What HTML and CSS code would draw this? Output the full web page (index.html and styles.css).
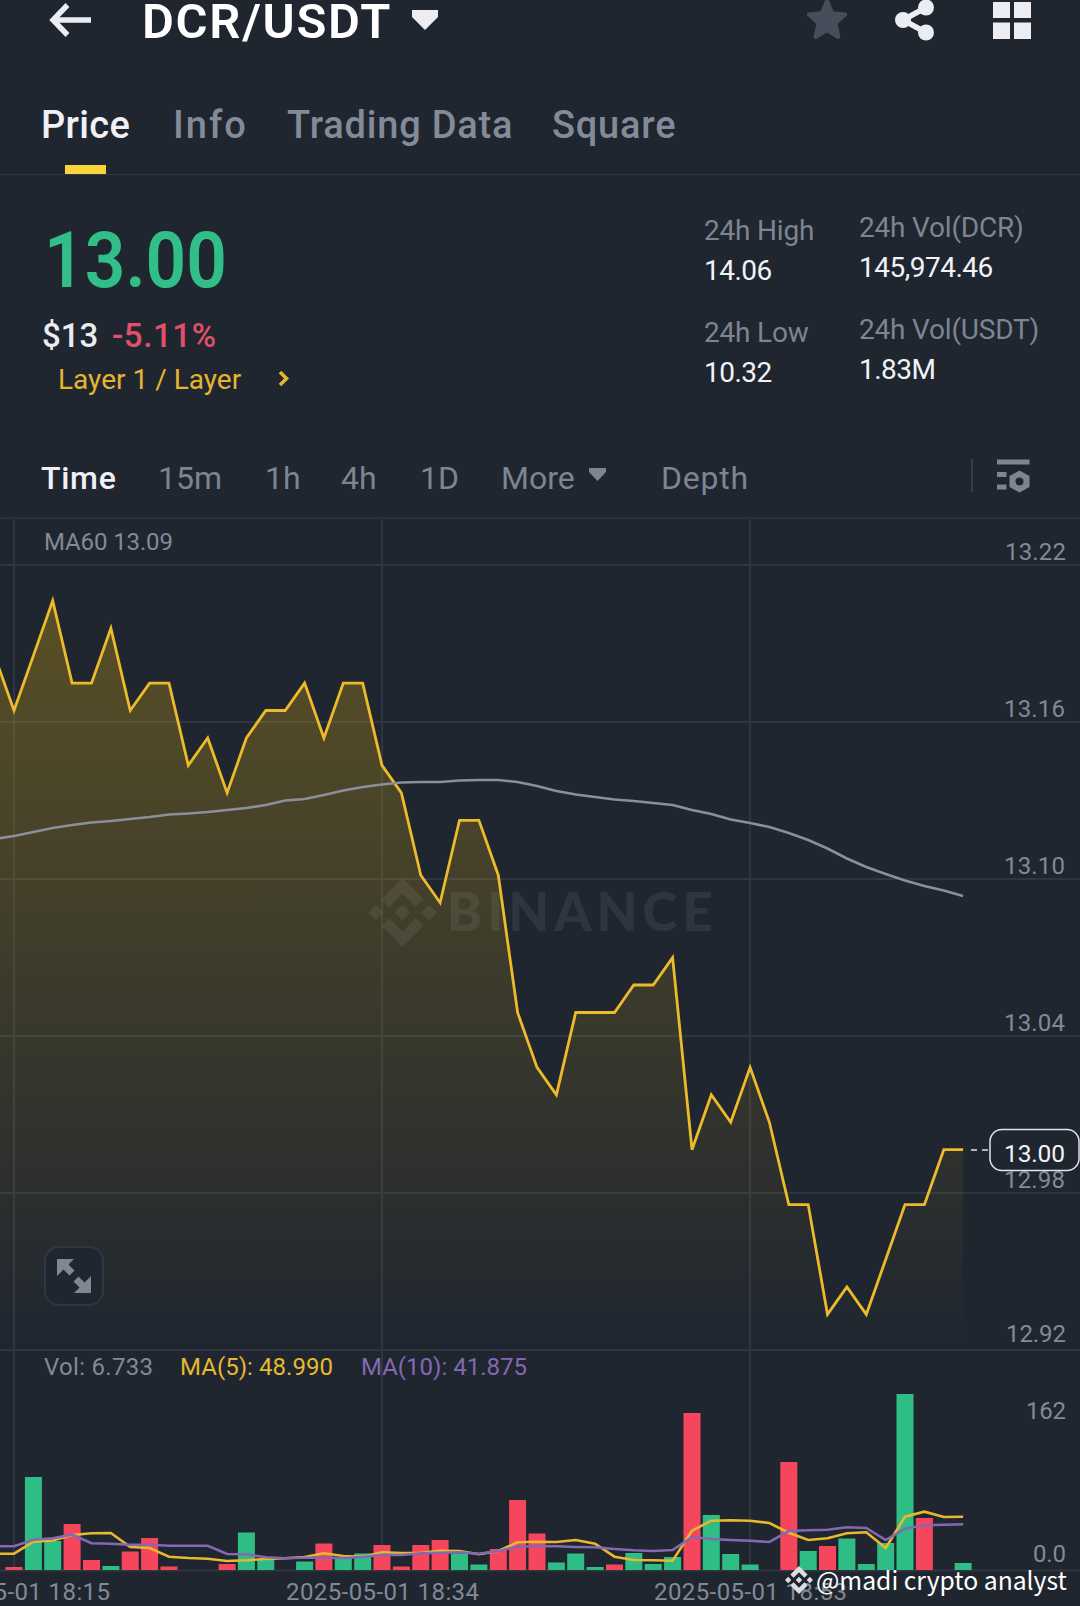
FILE: index.html
```html
<!DOCTYPE html>
<html lang="en">
<head>
    <meta charset="UTF-8">
    <meta name="viewport" content="width=device-width, initial-scale=1.0">
    <title>DCR/USDT</title>
    <link rel="stylesheet" href="styles.css">
</head>
<body>

    <!-- Shared logo shape -->
    <svg class="symbols" width="0" height="0">
        <symbol id="logo" viewBox="0 0 24 24">
            <path d="M16.624 13.92l2.7175 2.7154-7.353 7.353-7.353-7.352 2.7175-2.7164 4.6355 4.6595 4.6356-4.6595zm4.6366-4.6366L24 12l-2.7154 2.7164L18.5682 12l2.6924-2.7164zm-9.272.001l2.7163 2.6914-2.7164 2.7174v-.001L9.2721 12l2.7164-2.7154zm-9.2722-.001L5.4088 12l-2.6914 2.6924L0 12l2.7164-2.7164zM11.9885.0115l7.353 7.329-2.7174 2.7154-4.6356-4.6356-4.6355 4.6595-2.7174-2.7154 7.353-7.353z"/>
        </symbol>
    </svg>

    <header class="header">
        <svg class="back" width="42" height="36" viewBox="0 0 42 36">
            <path d="M18.5 3L4 18l14.5 15M4 18h38" fill="none" stroke="currentColor" stroke-width="5.4"/>
        </svg>
        <h1 class="pair">DCR/USDT</h1>
        <svg class="pair-caret" width="26" height="20" viewBox="0 0 26 20">
            <path d="M0 0h26v7L13 20 0 7z" fill="currentColor"/>
        </svg>
        <div class="header-actions">
            <svg class="star" width="42" height="43" viewBox="0 0 42 43">
                <path d="M21 3l5.2 12.2 13 1.2-9.8 9 3 13.6L21 32.2 9.6 39l3-13.6-9.8-9 13-1.2z" fill="currentColor" stroke="currentColor" stroke-width="4" stroke-linejoin="round"/>
            </svg>
            <svg class="share" width="40" height="42" viewBox="0 0 40 42">
                <path d="M31 8.5L8 21l23 12.5" fill="none" stroke="currentColor" stroke-width="5.5"/>
                <circle cx="8" cy="21" r="8" fill="currentColor"/>
                <circle cx="31" cy="8.5" r="8" fill="currentColor"/>
                <circle cx="31" cy="33.5" r="8" fill="currentColor"/>
            </svg>
            <svg class="apps" width="38" height="38" viewBox="0 0 38 38">
                <path d="M0 1h17v16H0zM21 1h17v16H21zM0 21.5h17V38H0zM21 21.5h17V38H21z" fill="currentColor"/>
            </svg>
        </div>
    </header>

    <nav class="tabs">
        <div class="tab active">Price</div>
        <div class="tab info">Info</div>
        <div class="tab">Trading Data</div>
        <div class="tab">Square</div>
    </nav>

    <section class="summary">
        <div class="quote">
            <div class="last-price">13.00</div>
            <div class="change"><span class="fiat">$13</span><span class="percent">-5.11%</span></div>
            <div class="category">
                <span>Layer 1 / Layer</span>
                <svg width="12" height="17" viewBox="0 0 12 17">
                    <path d="M2 2l6.5 6.5L2 15" fill="none" stroke="currentColor" stroke-width="3.6"/>
                </svg>
            </div>
        </div>
        <div class="stats">
            <div class="stat">
                <div class="stat-label">24h High</div>
                <div class="stat-value">14.06</div>
            </div>
            <div class="stat">
                <div class="stat-label">24h Low</div>
                <div class="stat-value">10.32</div>
            </div>
        </div>
        <div class="stats volume">
            <div class="stat">
                <div class="stat-label">24h Vol(DCR)</div>
                <div class="stat-value">145,974.46</div>
            </div>
            <div class="stat">
                <div class="stat-label">24h Vol(USDT)</div>
                <div class="stat-value">1.83M</div>
            </div>
        </div>
    </section>

    <div class="intervals">
        <span class="interval active">Time</span>
        <span class="interval">15m</span>
        <span class="interval">1h</span>
        <span class="interval">4h</span>
        <span class="interval">1D</span>
        <span class="interval more">More
            <svg width="17" height="13" viewBox="0 0 17 13"><path d="M0 0h17v4L8.5 13 0 4z" fill="currentColor"/></svg>
        </span>
        <span class="interval depth">Depth</span>
        <span class="divider"></span>
        <svg class="settings" width="33" height="34" viewBox="0 0 33 34">
            <path d="M0 .5h32.5v5H0zM0 13h9.5v5H0zM0 25.500h9.5v5H0z" fill="currentColor"/>
            <path fill-rule="evenodd" d="M22.5 11.5l10 5.5v11l-10 5.5-10-5.5V17zM22.5 18.5a4 4 0 1 0 0 8 4 4 0 0 0 0-8z" fill="currentColor"/>
        </svg>
    </div>

    <main class="chart">
        <svg class="plot" width="1080" height="1087" viewBox="0 519 1080 1087">
            <defs>
                <linearGradient id="areaFill" gradientUnits="userSpaceOnUse" x1="0" y1="600" x2="0" y2="1350">
                    <stop offset="0" stop-color="#f0b90b" stop-opacity="0.28"/>
                    <stop offset="1" stop-color="#f0b90b" stop-opacity="0"/>
                </linearGradient>
            </defs>

            <g class="grid">
                <path d="M0 565H1080M0 722H1080M0 879H1080M0 1036H1080M0 1193H1080M0 1350H1080M0 1570.5H1080"/>
                <path d="M14 519V1570M382 519V1570M750 519V1570"/>
            </g>

            <path id="area" fill="url(#areaFill)"/>

            <g class="brand">
                <use href="#logo" x="368" y="878" width="69" height="69"/>
                <text x="447" y="931" textLength="266">BINANCE</text>
            </g>

            <path id="priceLine" class="line price-line"/>
            <path id="ma60" class="line ma60-line"/>
            <path class="last-dash" d="M971 1150H990"/>

            <g id="bars"></g>
            <path id="ma5" class="line ma5-line"/>
            <path id="ma10" class="line ma10-line"/>

            <g class="label">
                <text x="44" y="550" textLength="129">MA60 13.09</text>
                <text x="1005" y="559.5" textLength="61">13.22</text>
                <text x="1004" y="717" textLength="61">13.16</text>
                <text x="1004" y="874" textLength="61">13.10</text>
                <text x="1004" y="1031" textLength="61">13.04</text>
                <text x="1004" y="1188" textLength="61">12.98</text>
                <text x="1006" y="1342" textLength="60">12.92</text>
                <text x="1026" y="1419" textLength="40">162</text>
                <text x="1033" y="1562" textLength="33">0.0</text>
                <text x="44" y="1375" textLength="109">Vol: 6.733</text>
                <text class="ma5-text" x="180" y="1375" textLength="153">MA(5): 48.990</text>
                <text class="ma10-text" x="361" y="1375" textLength="166">MA(10): 41.875</text>
                <text x="-83" y="1600" textLength="193">2025-05-01 18:15</text>
                <text x="286" y="1600" textLength="193">2025-05-01 18:34</text>
                <text x="654" y="1600" textLength="193">2025-05-01 18:53</text>
            </g>

            <rect class="last-box" x="990" y="1129.5" width="89" height="41" rx="12"/>
            <text class="last-text" x="1004" y="1162" textLength="61">13.00</text>
        </svg>

        <div class="expand">
            <svg width="34" height="34" viewBox="0 0 34 34">
                <path d="M0 0h17l-5.5 5.5 6 6-5 5-6-6L0 17zM34 34H17l5.5-5.5-6-6 5-5 6 6L34 17z" fill="currentColor"/>
            </svg>
        </div>

        <div class="watermark">
            <svg width="28" height="28"><use href="#logo" width="28" height="28"/></svg>
            <span>@madi crypto analyst</span>
        </div>
    </main>

    <script src="chart.js"></script>
</body>
</html>
```

FILE: styles.css
```css
/* Base Styles */

* {
    box-sizing: border-box;
}

body {
    margin: 0;
    width: 1080px;
    height: 1606px;
    overflow: hidden;
    background-color: #1f2630;
    color: #eaecef;
    font-family: Roboto, "Liberation Sans", sans-serif;
}

svg {
    display: block;
    flex-shrink: 0;
}

.symbols {
    position: absolute;
}

/* Header */

.header {
    display: flex;
    align-items: center;
    height: 39px;
    margin-bottom: 61px;
    padding: 0 49px 0 49px;
    color: #ebedf3;
}

.pair {
    margin: 5px 0 0 51px;
    width: 270px;
    font-size: 49px;
    line-height: 44px;
    font-weight: 600;
    letter-spacing: 1.7px;
    color: #fff;
}

.header-actions {
    display: flex;
    align-items: center;
    margin-left: auto;
}

.star {
    color: #474d5b;
}

.share {
    margin-left: 47px;
}

.apps {
    margin-left: 58px;
}

/* Tabs */

.tabs {
    display: grid;
    grid-template-columns: 132px 114px 265px auto;
    height: 75px;
    padding-left: 41px;
    border-bottom: 1px solid #2f3642;
}

.tab {
    justify-self: start;
    font-size: 38px;
    line-height: 50px;
    font-weight: 500;
    letter-spacing: 0.8px;
    color: #848b98;
}

.tab.active {
    letter-spacing: 0.3px;
    color: #f0f1f6;
}

.tab.info {
    letter-spacing: 2px;
}

.tab.active::after {
    content: "";
    display: block;
    width: 41px;
    height: 9px;
    margin: 15px auto 0;
    background-color: #f8d33a;
}

/* Price summary */

.summary {
    display: flex;
    height: 283px;
    padding-left: 42px;
}

.quote {
    width: 662px;
    padding-top: 46px;
}

.last-price {
    font-size: 77px;
    line-height: 80px;
    font-weight: 600;
    color: #32be88;
    transform: translateX(2px) scaleX(0.925);
    transform-origin: left;
}

.change {
    display: flex;
    margin-top: 15px;
    font-size: 33px;
    line-height: 40px;
    font-weight: 500;
}

.fiat {
    width: 70px;
}

.percent {
    letter-spacing: 0.6px;
    color: #e0506a;
}

.category {
    display: flex;
    align-items: center;
    margin: 4px 0 0 16px;
    font-size: 28px;
    line-height: 40px;
    color: #e6b42e;
}

.category span {
    width: 220px;
}

.category svg {
    margin-top: -3px;
}

.stats {
    display: flex;
    flex-direction: column;
    gap: 22px;
    width: 155px;
    padding-top: 35.5px;
    font-size: 28px;
    line-height: 40px;
    letter-spacing: -0.2px;
    white-space: nowrap;
}

.stats.volume {
    padding-top: 32.5px;
}

.stat-label {
    color: #7d8492;
}

.stat-value {
    letter-spacing: -0.5px;
    color: #f2f3f7;
}

/* Intervals */

.intervals {
    display: grid;
    grid-template-columns: 117px 107px 76px 79px 81px 160px 310px 25px auto;
    height: 61px;
    padding-left: 41px;
    border-bottom: 2px solid #2b303c;
    font-size: 32px;
    line-height: 40px;
    color: #7d8492;
}

.interval.active {
    font-weight: 500;
    letter-spacing: 0.7px;
    color: #eff0f5;
}

.interval.more {
    display: flex;
    gap: 14px;
}

.interval.more svg {
    margin-top: 10px;
}

.interval.depth {
    letter-spacing: 0.8px;
}

.divider {
    width: 2px;
    height: 33px;
    margin-top: 1px;
    background-color: #363c48;
}

.settings {
    margin: 1px 0 0 1px;
}

/* Chart */

.chart {
    position: relative;
}

.grid path {
    fill: none;
    stroke: #2f3641;
    stroke-width: 2;
}

.brand {
    fill: #c8ccd8;
    opacity: 0.09;
    font-family: Lato, Roboto, sans-serif;
    font-size: 53px;
    font-weight: 900;
}

.line {
    fill: none;
    stroke-width: 2.6;
}

.price-line {
    stroke: #edbb2a;
    stroke-width: 2.8;
}

.ma60-line {
    stroke: #8b8f9b;
}

.ma5-line {
    stroke: #e6b92e;
}

.ma10-line {
    stroke: #8567b2;
}

.last-dash {
    stroke: #e0e2ea;
    stroke-width: 1.5;
    stroke-dasharray: 6 5;
}

.bar-up {
    fill: #2fbd86;
}

.bar-down {
    fill: #f6465d;
}

.label {
    font-size: 24px;
    fill: #838996;
}

.ma5-text {
    fill: #e6b92e;
}

.ma10-text {
    fill: #8567b2;
}

.last-box {
    fill: #1f2630;
    stroke: #e2e4ee;
    stroke-width: 1.5;
}

.last-text {
    font-size: 24.5px;
    fill: #f2f3f8;
}

.expand {
    position: absolute;
    left: 44px;
    top: 727px;
    display: flex;
    align-items: center;
    justify-content: center;
    width: 60px;
    height: 60px;
    border: 2px solid #303744;
    border-radius: 15px;
    background-color: #1f2630;
    color: #7f8694;
}

.watermark {
    position: absolute;
    left: 785px;
    top: 1044px;
    display: flex;
    align-items: center;
    gap: 3px;
    font-family: "Noto Sans CJK SC", "Noto Sans", sans-serif;
    font-size: 24.7px;
    line-height: 36px;
    white-space: nowrap;
    color: #fff;
}

.watermark span {
    margin-top: -2px;
}

.watermark svg {
    fill: #dcdee2;
}
```

FILE: chart.js
```js
const startX = 14;
const stepX = 19.37;
const baseY = 1570;
const barWidth = 17;

// Price in cents above 13.00, the first one lies left of the screen
const prices = [18, 16, 18, 20, 17, 17, 19, 16, 17, 17, 14, 15, 13, 15, 16, 16, 17,
    15, 17, 17, 14, 13, 10, 9, 12, 12, 10, 5, 3, 2, 5, 5, 5, 6, 6, 7, 0, 2, 1, 3,
    1, -2, -2, -6, -5, -6, -4, -2, -2, 0, 0];

const ma60 = [839, 836, 832, 828, 825, 822.5, 821, 819, 817, 814.5, 813.5, 812, 810,
    808, 805, 800.5, 799, 795, 790.5, 787, 784.5, 782.5, 782, 782, 780.5, 780, 780,
    782, 786, 791, 794.5, 797, 799.5, 801, 803, 805, 810, 814, 819.5, 823, 827, 833,
    840, 848.5, 858.5, 867, 874, 880.5, 886, 890.5, 896];

const ma5 = [1553.7, 1553.7, 1541.7, 1540.5, 1535, 1533.3, 1533, 1547, 1548, 1556.7,
    1558, 1558.7, 1561, 1560.3, 1559, 1558.3, 1557, 1553.3, 1556, 1556.7, 1552.3,
    1553, 1552.7, 1550.7, 1551, 1554.3, 1551, 1542.3, 1541.7, 1542, 1540, 1543.7,
    1556.7, 1560, 1560.3, 1560.7, 1530.7, 1520.7, 1520.3, 1520.7, 1523, 1532.7,
    1540, 1538.3, 1533.3, 1532.3, 1548, 1516.7, 1511.7, 1517, 1516.7];

const ma10 = [1546.3, 1546.3, 1539.7, 1538.3, 1534.7, 1543.3, 1543.7, 1544.7, 1544.7,
    1545.7, 1545.7, 1545.7, 1554, 1554.3, 1557.3, 1558.3, 1557.7, 1557.7, 1558,
    1557, 1554.7, 1555, 1553.3, 1552.7, 1552.3, 1553.7, 1551, 1546.7, 1546, 1546.3,
    1547, 1547.3, 1549, 1550.3, 1551, 1550, 1537, 1539, 1540, 1540.7, 1542, 1531,
    1530.3, 1529.7, 1527.3, 1528, 1540, 1528.7, 1525.3, 1524.7, 1524.3];

// Bar heights, negative for a falling minute
const volumes = [-3, 93, 29, -46, -10, 4, -18.5, -32, -3.5, 0, 0, -6, 37.5, 10, 0, 8.5,
    -26.5, 12, 16.5, -25, -3.5, -25, -30, 16.5, 5.5, -21, -70, -36.5, 7.5, 16.5, 3,
    -5.5, 17, 6, 13, -157, 55, 16, 5.5, 0, -108, 19, -24, 31.5, 6, 27, 176, -52, 0, 7];

const toPath = (values) => values
    .map((y, i) => `${i ? 'L' : 'M'}${(startX + (i - 1) * stepX).toFixed(1)} ${y.toFixed(1)}`)
    .join('');

const pricePath = toPath(prices.map((p) => 1149.7 - p * 27.45));
const endX = startX + (prices.length - 2) * stepX;

document.getElementById('priceLine').setAttribute('d', pricePath);
document.getElementById('area').setAttribute('d', `${pricePath}L${endX} 1350L-6 1350Z`);
document.getElementById('ma60').setAttribute('d', toPath(ma60));
document.getElementById('ma5').setAttribute('d', toPath(ma5));
document.getElementById('ma10').setAttribute('d', toPath(ma10));

document.getElementById('bars').innerHTML = volumes.map((v, i) => {
    const h = Math.abs(v);
    const x = startX + i * stepX - barWidth / 2;
    return `<rect class="${v < 0 ? 'bar-down' : 'bar-up'}" x="${x.toFixed(1)}" y="${baseY - h}" width="${barWidth}" height="${h}"/>`;
}).join('');
```
